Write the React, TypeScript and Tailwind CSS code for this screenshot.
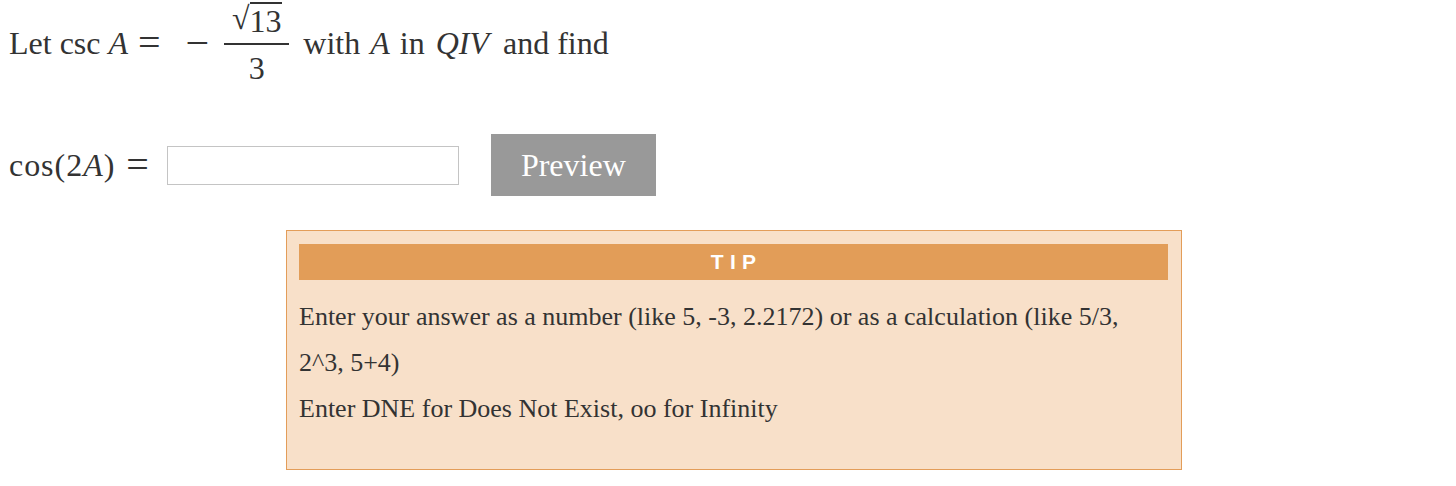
export default function App() {
  return (
    <div className="min-h-screen bg-white text-[#333] font-['Liberation_Serif',serif]">
      <div className="pl-[9px] pt-[5px]">
        {/* question line */}
        <div className="flex items-center h-[76px] text-[32px] leading-none">
          <span>Let csc</span>
          <span className="italic ml-[8px]">A</span>
          <span className="ml-[10px] text-[40px]">=</span>
          <span className="ml-[25px] text-[42px]">−</span>
          <span className="ml-[15px] inline-flex flex-col items-center">
            <span className="flex items-start pb-[6px] px-[4px]">
              <span className="leading-none">√</span>
              <span className="border-t-[2px] border-[#333] leading-none pt-[1px]">13</span>
            </span>
            <span className="w-[65px] h-[2px] bg-[#333]" />
            <span className="pt-[7px]">3</span>
          </span>
          <span className="ml-[14px]">with</span>
          <span className="italic ml-[10px]">A</span>
          <span className="ml-[10px]">in</span>
          <span className="italic ml-[11px]">QIV</span>
          <span className="ml-[14px]">and find</span>
        </div>

        {/* answer row */}
        <div className="flex items-center mt-[53px] h-[62px]">
          <span className="text-[32px] leading-none tracking-[0.03em]">
            cos(2<span className="italic">A</span>)
          </span>
          <span className="text-[40px] leading-none ml-[11px]">=</span>
          <input
            type="text"
            className="ml-[18px] w-[292px] h-[39px] border border-[#c4c4c4] bg-white outline-none"
          />
          <button className="ml-[32px] w-[165px] h-[62px] bg-[#999] text-white text-[32px] font-['Liberation_Serif',serif]">
            Preview
          </button>
        </div>
      </div>

      {/* tip box */}
      <div className="ml-[286px] mt-[34px] w-[896px] h-[240px] border border-[#e39d59] bg-[#f8e0c9] pl-[12px] pr-[13px] pt-[13px]">
        <div className="h-[36px] bg-[#e29d58] flex items-center justify-center text-white font-bold text-[21px] tracking-[0.3em] pl-[0.3em] font-['Liberation_Sans',sans-serif]">
          TIP
        </div>
        <div className="mt-[14px] pr-[30px] text-[26px] leading-[46px] text-[#333]">
          <p>Enter your answer as a number (like 5, -3, 2.2172) or as a calculation (like 5/3, 2^3, 5+4)</p>
          <p>Enter DNE for Does Not Exist, oo for Infinity</p>
        </div>
      </div>
    </div>
  )
}
